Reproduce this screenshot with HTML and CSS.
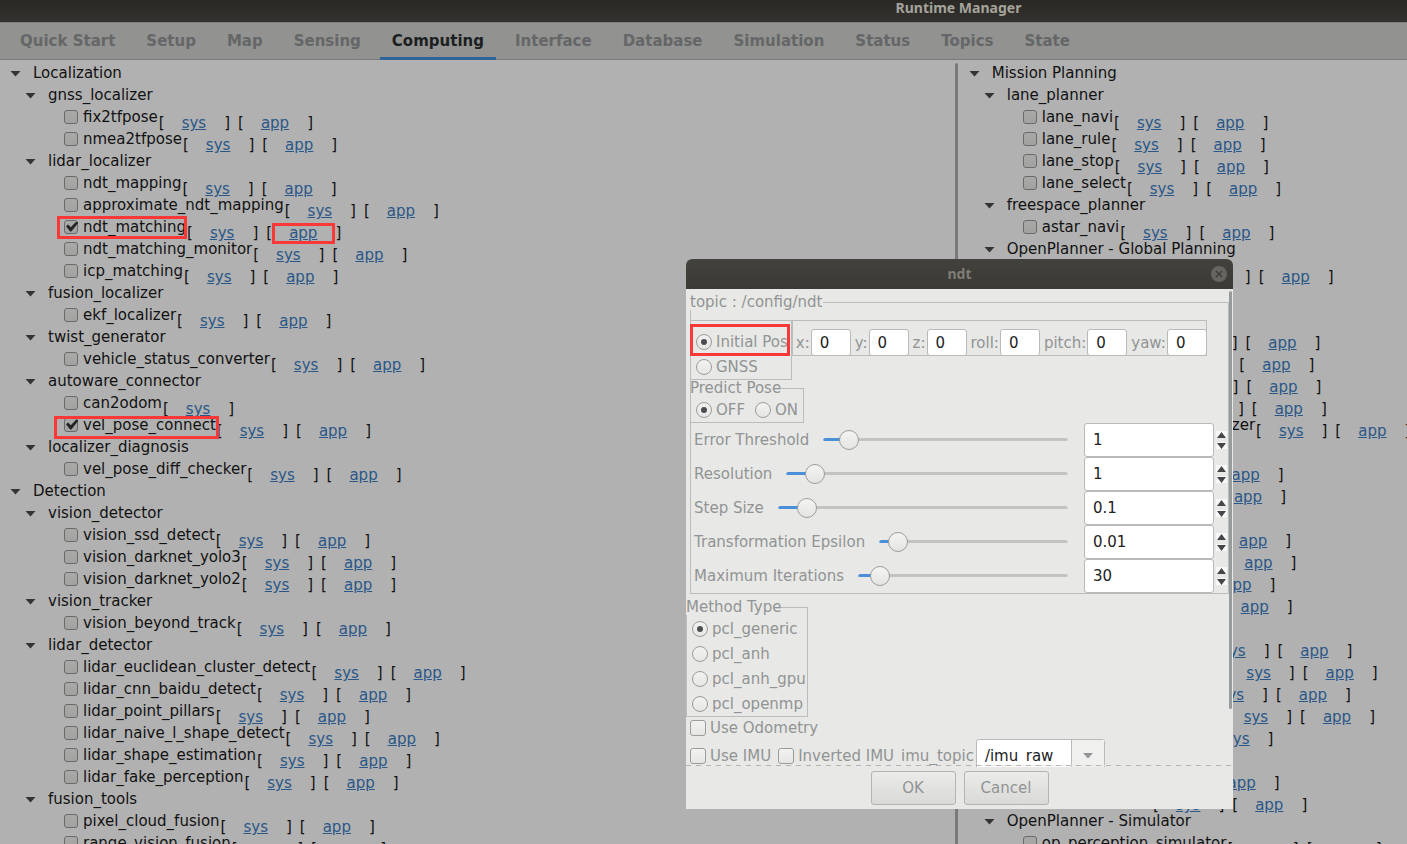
FILE: index.html
```html
<!DOCTYPE html>
<html lang="en">
<head>
    <meta charset="UTF-8">
    <title>Runtime Manager</title>
    <meta name="viewport" content="width=device-width, initial-scale=1.0">
    <link rel="stylesheet" href="styles.css">
</head>
<body>
    <div class="window">
        <header class="titlebar">Runtime Manager</header>
        <nav class="tabs">
            <button>Quick Start</button>
            <button>Setup</button>
            <button>Map</button>
            <button>Sensing</button>
            <button class="active">Computing</button>
            <button>Interface</button>
            <button>Database</button>
            <button>Simulation</button>
            <button>Status</button>
            <button>Topics</button>
            <button>State</button>
        </nav>
        <main class="panes">
            <div id="leftTree" class="tree"></div>
            <div class="divider"></div>
            <div id="rightTree" class="tree"></div>
        </main>
    </div>

    <div class="dialog" role="dialog" aria-labelledby="dialogTitle">
        <div class="dialog-title">
            <span id="dialogTitle">ndt</span>
            <button class="close" aria-label="Close">
                <svg width="8" height="8" viewBox="0 0 8 8"><path d="M1 1L7 7M7 1L1 7" stroke="#3c3b37" stroke-width="1.3"/></svg>
            </button>
        </div>
        <div class="dialog-body">
            <fieldset class="topic">
                <legend>topic : /config/ndt</legend>
                <div class="init">
                    <div class="init-mode">
                        <label class="option"><input type="radio" name="init" checked>Initial Pos</label>
                        <label class="option"><input type="radio" name="init">GNSS</label>
                        <span class="mark mark-radio"></span>
                    </div>
                    <div class="init-values">
                        <label>x:<input type="text" value="0"></label>
                        <label>y:<input type="text" value="0"></label>
                        <label>z:<input type="text" value="0"></label>
                        <label>roll:<input type="text" value="0"></label>
                        <label>pitch:<input type="text" value="0"></label>
                        <label>yaw:<input type="text" value="0"></label>
                    </div>
                </div>
                <fieldset class="predict">
                    <legend>Predict Pose</legend>
                    <label class="option"><input type="radio" name="predict" checked>OFF</label>
                    <label class="option"><input type="radio" name="predict">ON</label>
                </fieldset>
                <div id="sliders"></div>
            </fieldset>
            <fieldset class="method">
                <legend>Method Type</legend>
                <label class="option"><input type="radio" name="method" checked>pcl_generic</label>
                <label class="option"><input type="radio" name="method">pcl_anh</label>
                <label class="option"><input type="radio" name="method">pcl_anh_gpu</label>
                <label class="option"><input type="radio" name="method">pcl_openmp</label>
            </fieldset>
            <div class="checks">
                <label class="option"><input type="checkbox">Use Odometry</label>
            </div>
            <div class="checks imu">
                <label class="option"><input type="checkbox">Use IMU</label>
                <label class="option"><input type="checkbox">Inverted IMU</label>
                <label class="imu-label" for="imuTopic">imu_topic</label>
                <div class="combo">
                    <select id="imuTopic"><option>/imu_raw</option></select>
                    <span class="combo-arrow"><svg width="10" height="6" viewBox="0 0 10 6"><path d="M0 0H10L5 5.5Z" fill="#929595"/></svg></span>
                </div>
            </div>
            <div class="scrollbar"></div>
        </div>
        <div class="dialog-footer">
            <button>OK</button>
            <button>Cancel</button>
        </div>
    </div>

    <script>
        // [group, [[subgroup, [items]]]], "+" = checked, "!" = highlighted, "-" = no app link
        const leftData = [
            ['Localization', [
                ['gnss_localizer', ['fix2tfpose', 'nmea2tfpose']],
                ['lidar_localizer', ['ndt_mapping', 'approximate_ndt_mapping', '+!ndt_matching', 'ndt_matching_monitor', 'icp_matching']],
                ['fusion_localizer', ['ekf_localizer']],
                ['twist_generator', ['vehicle_status_converter']],
                ['autoware_connector', ['-can2odom', '+!vel_pose_connect']],
                ['localizer_diagnosis', ['vel_pose_diff_checker']]
            ]],
            ['Detection', [
                ['vision_detector', ['vision_ssd_detect', 'vision_darknet_yolo3', 'vision_darknet_yolo2']],
                ['vision_tracker', ['vision_beyond_track']],
                ['lidar_detector', ['lidar_euclidean_cluster_detect', 'lidar_cnn_baidu_detect', 'lidar_point_pillars', 'lidar_naive_l_shape_detect', 'lidar_shape_estimation', 'lidar_fake_perception']],
                ['fusion_tools', ['pixel_cloud_fusion', 'range_vision_fusion']]
            ]]
        ];

        const rightData = [
            ['Mission Planning', [
                ['lane_planner', ['lane_navi', 'lane_rule', 'lane_stop', 'lane_select']],
                ['freespace_planner', ['astar_navi']],
                ['OpenPlanner - Global Planning', ['op_global_planner']]
            ]],
            ['Motion Planning', [
                ['waypoint_maker', ['waypoint_loader', 'waypoint_saver', 'waypoint_clicker', 'waypoint_creator', 'waypoint_velocity_visualizer']],
                ['waypoint_planner', ['astar_avoid', 'velocity_set']],
                ['waypoint_follower', ['pure_pursuit', 'mpc_follower', 'twist_filter', 'wf_simulator']],
                ['OpenPlanner - Local Planning', ['op_common_params', 'op_trajectory_generator', 'op_motion_predictor', 'op_trajectory_evaluator', '-op_behavior_selector']],
                ['OpenPlanner - Utilities', ['op_pose2tf', 'op_car_tracker']],
                ['OpenPlanner - Simulator', ['op_perception_simulator']]
            ]]
        ];

        const sliders = [
            ['Error Threshold', 7, '1'],
            ['Resolution', 7, '1'],
            ['Step Size', 7, '0.1'],
            ['Transformation Epsilon', 5, '0.01'],
            ['Maximum Iterations', 6, '30']
        ];

        function renderGroup(name, level) {
            return `
                <div class="row group level${level}">
                    <svg width="11" height="6" viewBox="0 0 11 6"><path d="M0.5 0H10.5L5.5 5.5Z" fill="#333535"/></svg>
                    <span>${name}</span>
                </div>`;
        }

        function renderLink(name, marked) {
            return `<span class="link">[<span class="target"><a href="#">${name}</a>${marked ? '<span class="mark mark-link"></span>' : ''}</span>]</span>`;
        }

        function renderItem(item) {
            const name = item.replace(/^[+!-]+/, '');
            const flags = item.slice(0, item.length - name.length);
            return `
                <div class="row item">
                    <label><input type="checkbox" ${flags.includes('+') ? 'checked' : ''}>${name}</label>
                    <span class="links">
                        ${renderLink('sys')}
                        ${flags.includes('-') ? '' : renderLink('app', name === 'ndt_matching')}
                    </span>
                    ${flags.includes('!') ? `<span class="mark mark-${name}"></span>` : ''}
                </div>`;
        }

        function renderTree(id, data) {
            let html = '';
            data.forEach(([group, children]) => {
                html += renderGroup(group, 0);
                children.forEach(([sub, items]) => {
                    html += renderGroup(sub, 1) + items.map(renderItem).join('');
                });
            });
            document.getElementById(id).innerHTML = html;
        }

        function renderSliders() {
            document.getElementById('sliders').innerHTML = sliders.map(([name, pos, value], i) => `
                <div class="slider-row">
                    <label for="range${i}">${name}</label>
                    <input type="range" id="range${i}" min="0" max="100" value="${pos}">
                    <input type="text" value="${value}" aria-label="${name}">
                    <span class="spin">
                        <button aria-label="Increase"><svg width="9" height="6" viewBox="0 0 9 6"><path d="M4.5 0L9 6H0Z" fill="#444647"/></svg></button>
                        <button aria-label="Decrease"><svg width="9" height="6" viewBox="0 0 9 6"><path d="M0 0H9L4.5 6Z" fill="#444647"/></svg></button>
                    </span>
                </div>`).join('');
        }

        renderTree('leftTree', leftData);
        renderTree('rightTree', rightData);
        renderSliders();
    </script>
</body>
</html>
```
FILE: styles.css
```css
* {
    box-sizing: border-box;
}

body {
    margin: 0;
    height: 100vh;
    overflow: hidden;
    background: #b1b1b1;
    color: #111;
    font-family: 'DejaVu Sans', sans-serif;
    font-size: 15px;
    line-height: 22px;
}

button, input, select {
    font: inherit;
    margin: 0;
}

svg {
    display: block;
}

.window {
    height: 100%;
    display: flex;
    flex-direction: column;
}

.titlebar {
    height: 22px;
    flex: none;
    padding: 0 0 6px 510px;
    background: linear-gradient(#292824, #33322e);
    color: #a5a39b;
    font-family: 'Noto Sans', sans-serif;
    font-size: 14px;
    font-weight: bold;
    line-height: 16px;
    text-align: center;
}

.tabs {
    height: 38px;
    flex: none;
    display: flex;
    gap: 7px;
    padding-left: 8px;
    background: #929290;
    border-top: 1px solid #7d7d7b;
    border-bottom: 1px solid #7b7b79;
}

.tabs button {
    height: 37px;
    padding: 2px 12px 0;
    border: none;
    border-bottom: 3px solid transparent;
    background: none;
    color: #646667;
    font-weight: bold;
    white-space: nowrap;
}

.tabs .active {
    color: #1c1f21;
    border-bottom-color: #2f639a;
}

.panes {
    flex: 1;
    min-height: 0;
    display: grid;
    grid-template-columns: minmax(0, 17fr) 3px minmax(0, 8fr);
    overflow: hidden;
}

.divider {
    margin-top: 3px;
    border-radius: 2px 2px 0 0;
    background: #7a7a7a;
}

.tree {
    padding-top: 2px;
    overflow: hidden;
    white-space: nowrap;
}

.divider + .tree {
    padding-left: 1px;
}

.row {
    position: relative;
    display: flex;
    height: 22px;
}

.group {
    align-items: center;
    gap: 12px;
}

.group svg {
    margin-top: 2px;
}

.level0 {
    padding-left: 10px;
}

.level1 {
    padding-left: 25px;
}

.item {
    align-items: flex-start;
    gap: 1px;
    padding-left: 64px;
}

.item label {
    display: flex;
    align-items: center;
    gap: 5px;
}

/* the links hang a bit lower than their label */
.links {
    display: flex;
    gap: 8px;
    margin-top: 6px;
}

.link {
    display: flex;
}

.target {
    position: relative;
    padding: 0 18px 0 17px;
}

.target a {
    color: #2a5788;
}

input[type="checkbox"], input[type="radio"] {
    appearance: none;
    position: relative;
    flex: none;
    width: 16px;
    height: 16px;
    border: 1px solid #9c9d9b;
    border-radius: 3px;
    background: linear-gradient(#f2f2f1, #e6e6e4);
}

input[type="radio"] {
    border-radius: 50%;
}

.dialog input[type="radio"]:checked::before {
    content: "";
    position: absolute;
    inset: 4px;
    border-radius: 50%;
    background: #4b4f52;
}

.item input[type="checkbox"] {
    width: 14px;
    height: 14px;
    border-color: #6a6a69;
    background: linear-gradient(#a9a9a8, #a2a2a1);
}

.item input[type="checkbox"]:checked::before {
    content: "";
    position: absolute;
    inset: 0 -1px 1px 1px;
    background: #222426;
    clip-path: polygon(0 48%, 18% 32%, 40% 56%, 82% 8%, 100% 8%, 100% 20%, 44% 96%, 34% 96%);
}

/* red highlights */
.mark {
    position: absolute;
    z-index: 2;
    border: 3px solid #fb3838;
    pointer-events: none;
}

.mark-ndt_matching {
    top: 0;
    left: 57px;
    width: 130px;
    height: 23px;
}

.mark-vel_pose_connect {
    top: 2px;
    left: 54px;
    width: 165px;
    height: 23px;
}

.mark-link {
    inset: 1px 0 0;
}

.mark-radio {
    top: 3px;
    left: -1px;
    width: 100px;
    height: 32px;
}

.dialog {
    position: absolute;
    top: 259px;
    left: 686px;
    width: 547px;
    height: 550px;
    display: flex;
    flex-direction: column;
    border-radius: 6px 6px 0 0;
    background: #e8e8e6;
    color: #919494;
    line-height: 16px;
    white-space: nowrap;
    overflow: hidden;
}

.dialog-title {
    position: relative;
    flex: none;
    height: 30px;
    background: linear-gradient(#42413c, #3b3a36);
    color: #7f7d77;
    font-family: 'Noto Sans', sans-serif;
    font-size: 14px;
    font-weight: bold;
    line-height: 30px;
    text-align: center;
}

.close {
    position: absolute;
    top: 7px;
    right: 6px;
    width: 16px;
    height: 16px;
    display: grid;
    place-items: center;
    padding: 0;
    border: none;
    border-radius: 50%;
    background: #66645e;
}

.dialog-body {
    position: relative;
    flex: 1;
    min-height: 0;
    padding-top: 5px;
    overflow: hidden;
}

/* dashed edge at the bottom of the scrolled area */
.dialog-body::after {
    content: "";
    position: absolute;
    left: 0;
    right: 0;
    bottom: 1px;
    height: 1px;
    background: repeating-linear-gradient(90deg, #b4b4b2 0 5px, #e8e8e6 5px 10px);
}

fieldset {
    min-width: 0;
    margin: 0;
    padding: 0;
    border: 1px solid #bcbcba;
}

legend {
    margin-left: -1px;
    padding: 0;
}

.topic {
    margin: 0 4px;
}

.option {
    display: flex;
    align-items: center;
    gap: 4px;
    height: 25px;
}

.init {
    display: flex;
    align-items: flex-start;
    margin: 10px 0 0 -1px;
}

.init-mode {
    position: relative;
    padding: 8px 3px 0 5px;
    border: 1px solid #bcbcba;
}

.init-values {
    display: flex;
    gap: 4px;
    padding: 8px 0 0 3px;
    border: 1px solid #bcbcba;
}

.init-values label {
    display: flex;
    align-items: center;
    gap: 1px;
    margin-bottom: -1px;
}

.dialog input[type="text"] {
    border: 1px solid #b9b9b7;
    border-radius: 3px;
    background: #fff;
    color: #222;
    padding: 0 8px;
}

.init-values input[type="text"] {
    width: 40px;
    height: 27px;
}

.init-values label:last-child {
    margin-right: -1px;
}

.predict {
    display: flex;
    gap: 10px;
    width: fit-content;
    margin-left: -1px;
    padding: 1px 5px 0;
}

.predict legend, .method legend {
    margin-left: -6px;
}

.slider-row {
    display: flex;
    align-items: center;
    height: 34px;
    padding-left: 3px;
}

.slider-row input[type="range"] {
    appearance: none;
    flex: 1;
    min-width: 0;
    height: 20px;
    margin: 0 16px 0 14px;
    background: none;
}

.slider-row input[type="range"]::-webkit-slider-runnable-track {
    height: 4px;
    border-bottom: 1px solid transparent;
    border-radius: 2px;
    background: linear-gradient(90deg, #4a90d9 10%, #c3c3c1 10%) padding-box;
}

.slider-row input[type="range"]::-webkit-slider-thumb {
    appearance: none;
    width: 20px;
    height: 20px;
    margin-top: -8px;
    border: 1px solid #9c9d9b;
    border-radius: 50%;
    background: linear-gradient(#f4f4f3, #e4e4e2);
}

.slider-row input[type="text"] {
    width: 130px;
    height: 34px;
}

.spin {
    display: flex;
    flex-direction: column;
    gap: 4px;
    margin: 0 1px 0 2px;
}

.spin button {
    width: 11px;
    height: 7px;
    display: grid;
    place-items: center;
    padding: 0;
    border: none;
    background: #f8f8f8;
}

.method {
    width: fit-content;
    margin-top: 5px;
    padding: 1px 1px 0 5px;
}

.checks {
    display: flex;
    align-items: center;
    height: 22px;
    padding-left: 4px;
}

.imu {
    height: 34px;
    gap: 7px;
}

.imu-label {
    margin-right: -5px;
}

.combo {
    position: relative;
    width: 129px;
}

.combo select {
    appearance: none;
    width: 100%;
    height: 34px;
    padding: 0 36px 0 8px;
    border: 1px solid #b9b9b7;
    border-radius: 3px;
    background: #fff;
    color: #222;
}

.combo-arrow {
    position: absolute;
    inset: 1px 1px 1px auto;
    width: 33px;
    display: grid;
    place-items: center;
    border-left: 1px solid #b9b9b7;
    background: #f0f0ef;
    pointer-events: none;
}

.scrollbar {
    position: absolute;
    top: 2px;
    right: 1px;
    width: 3px;
    height: 418px;
    border-radius: 2px;
    background: #989b9b;
}

.dialog-footer {
    flex: none;
    display: flex;
    justify-content: center;
    gap: 8px;
    padding: 4px 0;
}

.dialog-footer button {
    width: 85px;
    height: 34px;
    border: 1px solid #b4b4b2;
    border-radius: 3px;
    background: linear-gradient(#ebebea, #d9d9d7);
    color: #919494;
}
```
